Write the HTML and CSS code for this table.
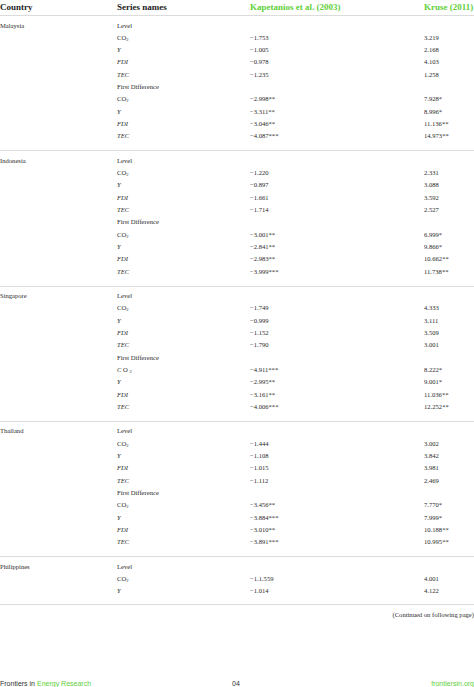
FILE: index.html
```html
<!DOCTYPE html>
<html>
<head>
<meta charset="utf-8">
<link rel="stylesheet" href="styles.css">
</head>
<body>
<div class="page">
  <div class="table">
    <div class="head">
      <div>Country</div>
      <div>Series names</div>
      <div class="green">Kapetanios et al. (2003)</div>
      <div class="green">Kruse (2011)</div>
    </div>

    <div class="group">
      <div class="country r10">Malaysia</div>
      <div>Level</div><div></div><div></div>
      <div>CO<sub>2</sub></div><div>−1.753</div><div>3.219</div>
      <div><i>Y</i></div><div>−1.005</div><div>2.168</div>
      <div><i>FDI</i></div><div>−0.978</div><div>4.103</div>
      <div><i>TEC</i></div><div>−1.235</div><div>1.258</div>
      <div>First Difference</div><div></div><div></div>
      <div>CO<sub>2</sub></div><div>−2.998**</div><div>7.928*</div>
      <div><i>Y</i></div><div>−3.311**</div><div>8.996*</div>
      <div><i>FDI</i></div><div>−3.046**</div><div>11.136**</div>
      <div><i>TEC</i></div><div>−4.087***</div><div>14.973**</div>
    </div>

    <div class="group">
      <div class="country r10">Indonesia</div>
      <div>Level</div><div></div><div></div>
      <div>CO<sub>2</sub></div><div>−1.220</div><div>2.331</div>
      <div><i>Y</i></div><div>−0.897</div><div>3.088</div>
      <div><i>FDI</i></div><div>−1.661</div><div>3.592</div>
      <div><i>TEC</i></div><div>−1.714</div><div>2.527</div>
      <div>First Difference</div><div></div><div></div>
      <div>CO<sub>2</sub></div><div>−3.001**</div><div>6.999*</div>
      <div><i>Y</i></div><div>−2.841**</div><div>9.866*</div>
      <div><i>FDI</i></div><div>−2.983**</div><div>10.662**</div>
      <div><i>TEC</i></div><div>−3.999***</div><div>11.738**</div>
    </div>

    <div class="group">
      <div class="country r10">Singapore</div>
      <div>Level</div><div></div><div></div>
      <div>CO<sub>2</sub></div><div>−1.749</div><div>4.333</div>
      <div><i>Y</i></div><div>−0.999</div><div>3.111</div>
      <div><i>FDI</i></div><div>−1.152</div><div>3.509</div>
      <div><i>TEC</i></div><div>−1.790</div><div>3.001</div>
      <div>First Difference</div><div></div><div></div>
      <div><i>C</i> O <sub>2</sub></div><div>−4.911***</div><div>8.222*</div>
      <div><i>Y</i></div><div>−2.995**</div><div>9.001*</div>
      <div><i>FDI</i></div><div>−3.161**</div><div>11.036**</div>
      <div><i>TEC</i></div><div>−4.006***</div><div>12.252**</div>
    </div>

    <div class="group">
      <div class="country r10">Thailand</div>
      <div>Level</div><div></div><div></div>
      <div>CO<sub>2</sub></div><div>−1.444</div><div>3.002</div>
      <div><i>Y</i></div><div>−1.108</div><div>3.842</div>
      <div><i>FDI</i></div><div>−1.015</div><div>3.981</div>
      <div><i>TEC</i></div><div>−1.112</div><div>2.469</div>
      <div>First Difference</div><div></div><div></div>
      <div>CO<sub>2</sub></div><div>−3.456**</div><div>7.770*</div>
      <div><i>Y</i></div><div>−3.884***</div><div>7.999*</div>
      <div><i>FDI</i></div><div>−3.010**</div><div>10.188**</div>
      <div><i>TEC</i></div><div>−3.891***</div><div>10.995**</div>
    </div>

    <div class="group last">
      <div class="country r3">Philippines</div>
      <div>Level</div><div></div><div></div>
      <div>CO<sub>2</sub></div><div>−1.1.559</div><div>4.001</div>
      <div><i>Y</i></div><div>−1.014</div><div>4.122</div>
    </div>
  </div>

  <div class="continued">(Continued on following page)</div>

  <div class="footer">
    <div class="journal">Frontiers in <span class="green">Energy Research</span></div>
    <div class="pagenum">04</div>
    <div class="site green">frontiersin.org</div>
  </div>
</div>
</body>
</html>
```

FILE: styles.css
```css
html, body {
  margin: 0;
  padding: 0;
  background: #ffffff;
}

.page {
  width: 474px;
  height: 687px;
  overflow: hidden;
  font-family: "Liberation Serif", "Times New Roman", serif;
  color: #2b2b2b;
}

.green {
  color: #62d13c;
}

.head,
.group {
  display: grid;
  grid-template-columns: 117px 133px 174px 1fr;
  white-space: nowrap;
}

.head {
  height: 15px;
  line-height: 15px;
  font-size: 9px;
  font-weight: bold;
  color: #1e1e1e;
  border-bottom: 1.5px solid #dcdcdc;
}

.head .green {
  color: #62d13c;
}

.group {
  grid-auto-rows: 12.33px;
  line-height: 12.33px;
  font-size: 6.6px;
  padding: 3.5px 0 7.5px;
  border-bottom: 1.5px solid #dcdcdc;
}

.group.last {
  padding-bottom: 6px;
}

.country {
  grid-column: 1;
  grid-row: 1;
}

.r10 { grid-row: 1 / span 10; }
.r3 { grid-row: 1 / span 3; }

sub {
  font-size: 0.7em;
  line-height: 0;
  vertical-align: -0.25em;
}

.continued {
  text-align: right;
  font-size: 6.6px;
  line-height: 9px;
  margin-top: 5px;
  white-space: nowrap;
}

.footer {
  display: flex;
  align-items: center;
  margin-top: 60px;
  height: 10px;
  font-family: "Liberation Sans", Arial, sans-serif;
  font-size: 7px;
  color: #333333;
}

.journal {
  width: 232px;
}

.pagenum {
  flex: 1;
}

.site {
  text-align: right;
}
```
